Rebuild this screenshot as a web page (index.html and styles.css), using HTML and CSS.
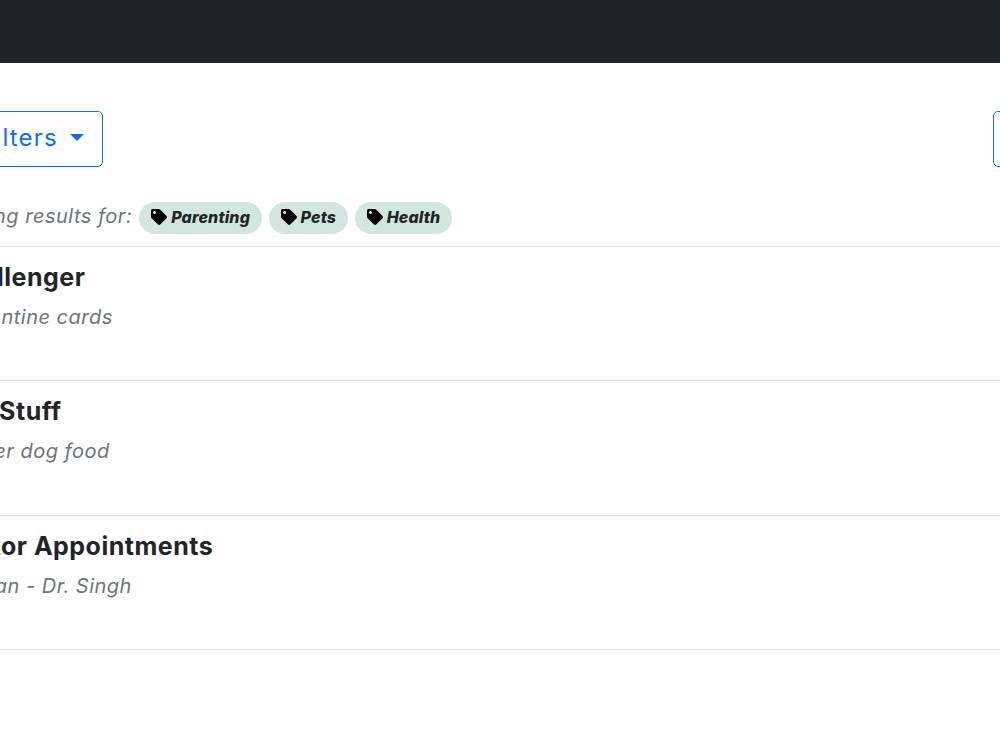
FILE: index.html
```html
<!DOCTYPE html>
<html lang="en">
<head>
    <meta charset="UTF-8">
    <title>Reminders</title>
    <link rel="stylesheet" href="styles.css">
</head>
<body>
    <header class="topbar"></header>
    <main class="content">
        <div class="toolbar">
            <button class="btn">Filters <span class="caret"></span></button>
            <button class="btn btn-right">Sort by</button>
        </div>
        <div class="filter-line">
            <span class="filter-label">Showing results for:</span>
            <span class="chip">
                <svg class="tag-icon" viewBox="0 0 512 512"><path d="M0 252.118V48C0 21.49 21.49 0 48 0h204.118a48 48 0 0 1 33.941 14.059l211.882 211.882c18.745 18.745 18.745 49.137 0 67.882L293.823 497.941c-18.745 18.745-49.137 18.745-67.882 0L14.059 286.059A48 48 0 0 1 0 252.118zM112 64c-26.51 0-48 21.49-48 48s21.49 48 48 48 48-21.49 48-48-21.49-48-48-48z"/></svg>
                Parenting
            </span>
            <span class="chip">
                <svg class="tag-icon" viewBox="0 0 512 512"><path d="M0 252.118V48C0 21.49 21.49 0 48 0h204.118a48 48 0 0 1 33.941 14.059l211.882 211.882c18.745 18.745 18.745 49.137 0 67.882L293.823 497.941c-18.745 18.745-49.137 18.745-67.882 0L14.059 286.059A48 48 0 0 1 0 252.118zM112 64c-26.51 0-48 21.49-48 48s21.49 48 48 48 48-21.49 48-48-21.49-48-48-48z"/></svg>
                Pets
            </span>
            <span class="chip">
                <svg class="tag-icon" viewBox="0 0 512 512"><path d="M0 252.118V48C0 21.49 21.49 0 48 0h204.118a48 48 0 0 1 33.941 14.059l211.882 211.882c18.745 18.745 18.745 49.137 0 67.882L293.823 497.941c-18.745 18.745-49.137 18.745-67.882 0L14.059 286.059A48 48 0 0 1 0 252.118zM112 64c-26.51 0-48 21.49-48 48s21.49 48 48 48 48-21.49 48-48-21.49-48-48-48z"/></svg>
                Health
            </span>
        </div>
        <ul class="result-list">
            <li class="result">
                <div class="result-title">Challenger</div>
                <div class="result-note">Valentine cards</div>
            </li>
            <li class="result">
                <div class="result-title">Dog Stuff</div>
                <div class="result-note">Order dog food</div>
            </li>
            <li class="result">
                <div class="result-title">Doctor Appointments</div>
                <div class="result-note">Susan - Dr. Singh</div>
            </li>
        </ul>
    </main>
</body>
</html>
```

FILE: styles.css
```css
html, body {
    margin: 0;
    padding: 0;
    overflow: hidden;
    height: 750px;
    background: #fff;
    font-family: Inter, "Open Sans", sans-serif;
    color: #212529;
}

.topbar {
    height: 63px;
    background: #212529;
}

/* the page is scrolled sideways in the shot, so the left edge sits off screen */
.content {
    margin-left: -66px;
    width: 1200px;
}

.toolbar {
    display: flex;
    gap: 890px;
    padding-top: 48px;
}

.btn {
    height: 56px;
    padding: 0 18px 3px 45px;
    border: 1px solid #0d6efd;
    border-radius: 5px;
    background: #fff;
    color: #0d6efd;
    font-family: inherit;
    font-size: 24px;
    letter-spacing: 1.2px;
    display: flex;
    align-items: center;
    gap: 12px;
    flex: none;
}

.caret {
    border-top: 7px solid #0d6efd;
    border-left: 7px solid transparent;
    border-right: 7px solid transparent;
}

.filter-line {
    display: flex;
    align-items: center;
    gap: 6.5px;
    margin-top: 35px;
    height: 32px;
    margin-bottom: 12px;
}

.filter-label {
    padding-bottom: 4px;
    margin-right: 0.5px;
    font-size: 20px;
    font-style: italic;
    letter-spacing: 0.5px;
    color: #6c757d;
}

.chip {
    display: flex;
    align-items: center;
    gap: 4px;
    height: 30px;
    padding: 0 12px 2px;
    border-radius: 16px;
    background: #d1e7dd;
    font-size: 16px;
    font-weight: 800;
    font-style: italic;
    letter-spacing: 0.15px;
}

.tag-icon {
    width: 16px;
    height: 16px;
}

.result-list {
    list-style: none;
    margin: 0;
    padding: 0;
    border-bottom: 1px solid #dee2e6;
}

.result {
    height: 133.4px;
    border-top: 1px solid #dee2e6;
    padding-left: 8px;
}

.result-title {
    margin-top: 15px;
    font-size: 25px;
    font-weight: 700;
    letter-spacing: 0.5px;
}

.result:first-child .result-title {
    padding-left: 5px;
}

.result-note {
    margin-top: 13px;
    padding-left: 16px;
    font-size: 20px;
    font-style: italic;
    letter-spacing: 0.5px;
    color: #6c757d;
}
```
